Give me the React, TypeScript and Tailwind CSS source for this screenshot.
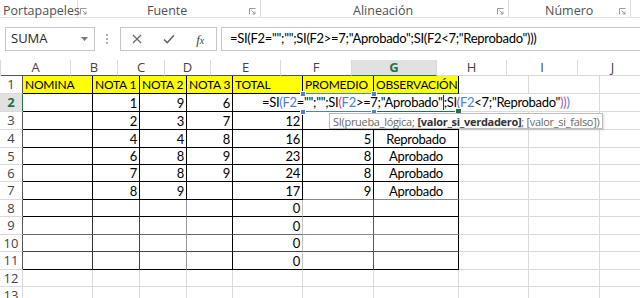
import React from 'react'

type Col = { key: string; w: string }

const COLS: Col[] = [
  { key: 'A', w: 'w-[70px]' },
  { key: 'B', w: 'w-[47px]' },
  { key: 'C', w: 'w-[47px]' },
  { key: 'D', w: 'w-[46px]' },
  { key: 'E', w: 'w-[70px]' },
  { key: 'F', w: 'w-[71px]' },
  { key: 'G', w: 'w-[85px]' },
  { key: 'H', w: 'w-[70px]' },
  { key: 'I', w: 'w-[71px]' },
  { key: 'J', w: 'w-[70px]' },
]

const ROW_H = [
  'h-[18px]', 'h-[18px]', 'h-[18px]', 'h-[18px]', 'h-[17px]', 'h-[17px]',
  'h-[18px]', 'h-[17px]', 'h-[18px]', 'h-[17px]', 'h-[18px]', 'h-[17px]', 'h-[17px]',
]

type Cell = { v: string; a?: 'l' | 'r' | 'c' }

const HEAD: Cell[] = [
  { v: 'NOMINA', a: 'l' },
  { v: 'NOTA 1', a: 'l' },
  { v: 'NOTA 2', a: 'l' },
  { v: 'NOTA 3', a: 'l' },
  { v: 'TOTAL', a: 'l' },
  { v: 'PROMEDIO', a: 'l' },
  { v: 'OBSERVACIÓN', a: 'l' },
]

// rows 2..11, columns A..G
const DATA: string[][] = [
  ['', '1', '9', '6', '', '', ''],
  ['', '2', '3', '7', '12', '', ''],
  ['', '4', '4', '8', '16', '5', 'Reprobado'],
  ['', '6', '8', '9', '23', '8', 'Aprobado'],
  ['', '7', '8', '9', '24', '8', 'Aprobado'],
  ['', '8', '9', '', '17', '9', 'Aprobado'],
  ['', '', '', '', '0', '', ''],
  ['', '', '', '', '0', '', ''],
  ['', '', '', '', '0', '', ''],
  ['', '', '', '', '0', '', ''],
]

const LOWER_RIGHT = [
  'border-r-[#333]',
  'border-r-[#444]',
  'border-r-[#999]',
  'border-r-black',
  'border-r-[#c4c4c4]',
  'border-r-[#555]',
  'border-r-black',
]

function rightBorder(row: number, col: number): string {
  if (col > 6 || row > 11) return 'border-r-[#dadada]'
  if (row <= 7) return 'border-r-black'
  return LOWER_RIGHT[col]
}

function bottomBorder(row: number, col: number): string {
  if (col > 6 || row > 11) return 'border-b-[#dadada]'
  if (row === 1 && col === 6) return 'border-b-[#217346]'
  if (row === 1 && col === 5) return 'border-b-[#4a7fd8]'
  if (row === 2 && col === 5) return 'border-b-[#4a7fd8]'
  if (row === 2 && col === 6) return 'border-b-[#217346]'
  if (row === 7 && col >= 5) return 'border-b-[#8a8a8a]'
  if (row === 9) return col < 5 ? 'border-b-[#666]' : 'border-b-[#8a8a8a]'
  if (row === 10) return col < 5 ? 'border-b-[#444]' : 'border-b-[#555]'
  return 'border-b-black'
}

function Launcher() {
  return (
    <svg width="7" height="7" viewBox="0 0 7 7" className="shrink-0">
      <path d="M0.5 6.5V0.5H6.5" fill="none" stroke="#9a9a9a" strokeWidth="1" />
      <path d="M2.5 2.5L6 6M6 3.5V6H3.5" fill="none" stroke="#9a9a9a" strokeWidth="1" />
    </svg>
  )
}

function RibbonGroup({ w, ml, label }: { w: string; ml: string; label: string }) {
  return (
    <div className={`${w} h-full flex items-center pt-[5px] border-r border-[#dcdcdc]`}>
      <span className={`${ml} leading-none`}>{label}</span>
      <span className="ml-auto mr-[4px]">
        <Launcher />
      </span>
    </div>
  )
}

const REF = 'text-[#4a7fd8]'
const P1 = 'text-[#4a7fd8]'
const P2 = 'text-[#e0457b]'
const P3 = 'text-[#9363c9]'

function EditFormula() {
  return (
    <span className="whitespace-nowrap">
      =SI<span className={P1}>(</span>
      <span className={REF}>F2</span>="";"";SI<span className={P2}>(</span>
      <span className={REF}>F2</span>&gt;=7;"Aprobado"
      <span className="inline-block w-px h-[15px] bg-[#1f3b1f] align-middle -mt-[2px]" />
      ;SI<span className={P3}>(</span>
      <span className={REF}>F2</span>&lt;7;"Reprobado"
      <span className={P3}>)</span>
      <span className={P2}>)</span>
      <span className={P1}>)</span>
    </span>
  )
}

function Corner({ pos }: { pos: string }) {
  return <div className={`absolute ${pos} w-[4px] h-[4px] bg-[#4a7fd8] border border-white box-content -m-px`} />
}

export default function App() {
  const cellFont = "font-['Lato','Liberation_Sans',sans-serif] tracking-[-0.3px]"
  const uiFont = "font-['Open_Sans','Liberation_Sans',sans-serif]"

  return (
    <div className={`w-[640px] h-[298px] overflow-hidden bg-white ${uiFont}`}>
      {/* ribbon group labels */}
      <div className="flex h-[18px] border-b border-[#e1e1e1] text-[12.5px] text-[#505050]">
        <RibbonGroup w="w-[78px]" ml="ml-[3px]" label="Portapapeles" />
        <RibbonGroup w="w-[183px]" ml="ml-[69px]" label="Fuente" />
        <RibbonGroup w="w-[248px]" ml="ml-[92px]" label="Alineación" />
        <RibbonGroup w="w-[122px]" ml="ml-[36px]" label="Número" />
      </div>

      {/* formula bar */}
      <div className="flex items-center mt-[9px] h-[24px]">
        <div className="ml-[5px] w-[90px] h-full border border-[#c6c6c6] flex items-center pl-[5px] pr-[6px] text-[13px] text-[#262626]">
          <span>SUMA</span>
          <svg width="7" height="4" viewBox="0 0 7 4" className="ml-auto">
            <path d="M0 0H7L3.5 4Z" fill="#777" />
          </svg>
        </div>
        <div className="ml-[11px] flex flex-col gap-[2px]">
          <div className="w-[2px] h-[2px] bg-[#b0b0b0]" />
          <div className="w-[2px] h-[2px] bg-[#b0b0b0]" />
          <div className="w-[2px] h-[2px] bg-[#b0b0b0]" />
        </div>
        <div className="ml-[12px] w-[97px] h-full border border-[#c6c6c6] flex items-center">
          <div className="w-[32px] flex justify-center">
            <svg width="10" height="10" viewBox="0 0 10 10">
              <path d="M1 1L9 9M9 1L1 9" stroke="#666" strokeWidth="1.2" />
            </svg>
          </div>
          <div className="w-[32px] flex justify-center">
            <svg width="12" height="10" viewBox="0 0 12 10">
              <path d="M1 5.5L4.3 8.6L11 1.2" fill="none" stroke="#666" strokeWidth="1.5" />
            </svg>
          </div>
          <div className="w-[32px] flex justify-center font-['Liberation_Serif',serif] italic text-[13px] text-[#444] leading-none">
            <span>f</span>
            <span className="text-[10px] mt-[3px]">x</span>
          </div>
        </div>
        <div className={`ml-[4px] flex-1 h-full border border-r-0 border-[#c6c6c6] flex items-center pl-[8px] text-[13px] text-black ${cellFont}`}>
          <span className="whitespace-nowrap">=SI(F2="";"";SI(F2&gt;=7;"Aprobado";SI(F2&lt;7;"Reprobado")))</span>
        </div>
      </div>

      {/* column headers */}
      <div className="flex mt-[9px] h-[16px] text-[13px] text-[#444]">
        <div className="w-[23px] h-full border-r border-b border-[#dadada] relative">
          <svg width="8" height="8" viewBox="0 0 8 8" className="absolute right-[4px] bottom-[2px]">
            <path d="M8 0V8H0Z" fill="#b8b8b8" />
          </svg>
        </div>
        {COLS.map((c, i) => (
          <div
            key={c.key}
            className={`${c.w} shrink-0 h-full flex items-center justify-center border-r border-r-[#dadada] border-b leading-none ${
              i === 6
                ? 'bg-[#e1e1e1] text-[#217346] font-bold border-b-[#217346]'
                : i < 6
                  ? 'border-b-[#555]'
                  : 'border-b-[#dadada]'
            }`}
          >
            {c.key}
          </div>
        ))}
      </div>

      {/* grid */}
      <div className={`relative ${cellFont} text-[13px] text-black`}>
        {ROW_H.map((h, ri) => {
          const row = ri + 1
          const cells: Cell[] =
            row === 1
              ? HEAD
              : row <= 11
                ? DATA[row - 2].map((v, ci) => ({ v, a: ci === 6 ? 'c' : ci === 0 ? 'l' : 'r' }))
                : []
          return (
            <div key={row} className={`flex ${h} ${row === 1 ? 'text-[12px] tracking-[-0.2px]' : ''}`}>
              <div
                className={`w-[23px] shrink-0 h-full flex items-center justify-center border-r border-b border-b-[#dadada] text-[13px] leading-none tracking-normal ${uiFont} ${
                  row === 2
                    ? 'bg-[#e1e1e1] text-[#217346] font-bold border-r-[#217346]'
                    : row <= 11
                      ? 'text-[#444] border-r-[#555]'
                      : 'text-[#444] border-r-[#dadada]'
                }`}
              >
                {row}
              </div>
              {COLS.map((c, ci) => {
                const cell = cells[ci]
                const align =
                  cell?.a === 'r' ? 'justify-end pr-[2px]' : cell?.a === 'c' ? 'justify-center' : 'justify-start pl-[2px]'
                return (
                  <div
                    key={c.key}
                    className={`${c.w} shrink-0 h-full flex items-center pt-[1px] border-r border-b overflow-hidden whitespace-nowrap leading-none ${align} ${rightBorder(
                      row,
                      ci,
                    )} ${bottomBorder(row, ci)} ${row === 1 && ci < 7 ? 'bg-[#ffff00]' : ''}`}
                  >
                    {cell?.v}
                  </div>
                )
              })}
            </div>
          )
        })}

        {/* cell being edited (G2) spills over E2:H2 */}
        <div className="absolute left-[233px] top-[18px] w-[340px] h-[17px] bg-white flex items-center pt-[1px] pl-[29px] leading-none">
          <EditFormula />
        </div>

        {/* F2 reference highlight */}
        <div className="absolute left-[302px] top-[17px] w-[72px] h-px bg-[#4a7fd8]" />
        <Corner pos="left-[301px] top-[16px]" />
        <Corner pos="left-[372px] top-[16px]" />
        <Corner pos="left-[301px] top-[34px]" />
        <Corner pos="left-[372px] top-[34px]" />

        {/* G2 fill handle */}
        <div className="absolute left-[456px] top-[33px] w-[5px] h-[5px] bg-[#217346] border border-white box-content -m-px" />

        {/* function tooltip */}
        <div
          className={`absolute left-[329px] top-[37px] h-[16px] px-[3px] flex items-center bg-white border border-[#bdbdbd] shadow-[1px_1px_2px_rgba(0,0,0,0.15)] text-[11px] leading-none text-[#6a6a6a] whitespace-nowrap tracking-[-0.3px] ${uiFont}`}
        >
          SI(prueba_lógica; <span className="font-bold text-[#333] ml-[3px]">[valor_si_verdadero]</span>; [valor_si_falso])
        </div>
      </div>
    </div>
  )
}
